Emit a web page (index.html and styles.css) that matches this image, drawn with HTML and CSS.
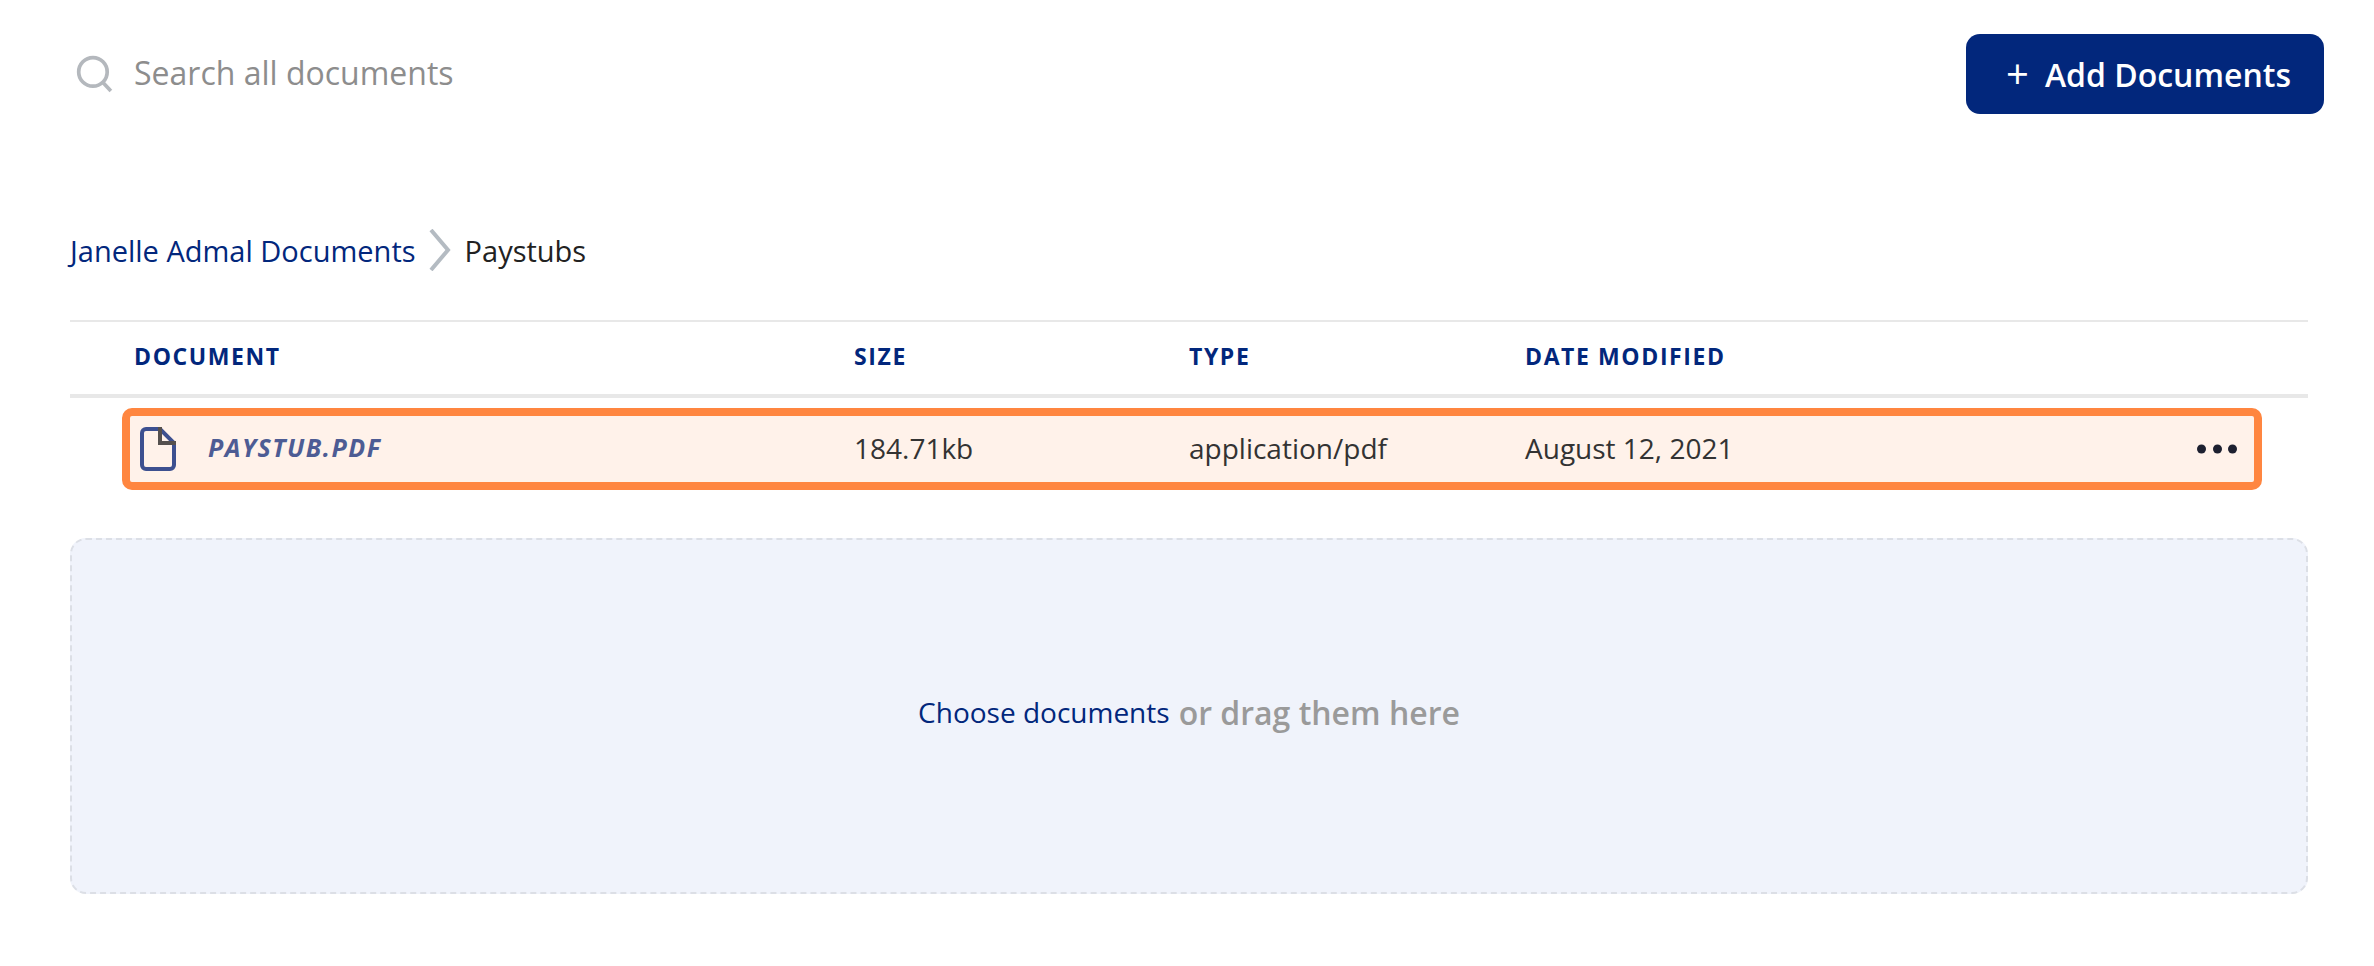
FILE: index.html
```html
<!DOCTYPE html>
<html lang="en">
<head>
<meta charset="utf-8">
<title>Documents</title>
<link rel="stylesheet" href="styles.css">
</head>
<body>
<main class="page">
  <header class="toolbar">
    <div class="search">
      <svg class="search-icon" viewBox="0 0 36 36" aria-hidden="true"><circle cx="17" cy="16" r="13.5"/><path d="M26.5 26 L34 34"/></svg>
      <span class="search-text">Search all documents</span>
    </div>
    <button class="add-btn"><span class="plus">+</span>Add Documents</button>
  </header>
  <nav class="crumbs">
    <span class="crumb-link">Janelle Admal Documents</span>
    <svg class="crumb-sep" viewBox="0 0 22 42" aria-hidden="true"><path d="M2 1 L19 21 L2 41"/></svg>
    <span class="crumb-current">Paystubs</span>
  </nav>
  <section class="table">
    <div class="head cols">
      <span>DOCUMENT</span><span>SIZE</span><span>TYPE</span><span>DATE MODIFIED</span>
    </div>
    <div class="row cols">
      <span class="name">
        <svg class="file-icon" viewBox="0 0 36 44" aria-hidden="true">
          <path class="file-body" d="M18 2 H6 a4 4 0 0 0 -4 4 V38 a4 4 0 0 0 4 4 H30 a4 4 0 0 0 4 -4 V16 L20 2 Z"/>
          <path class="file-fold" d="M20 0 V16 H36"/>
        </svg>
        <em>PAYSTUB.PDF</em>
      </span>
      <span>184.71kb</span>
      <span>application/pdf</span>
      <span>August 12, 2021</span>
      <span class="dots"><i></i><i></i><i></i></span>
    </div>
  </section>
  <section class="drop">
    <span class="choose">Choose documents</span><span class="drag">or drag them here</span>
  </section>
</main>
</body>
</html>
```
FILE: styles.css
```css
* { box-sizing: border-box; }
html, body { margin: 0; background: #fff; }
body { font-family: "Open Sans", "Noto Sans", sans-serif; color: #222; }
.page { padding: 34px 50px 0 70px; width: 2374px; }
.toolbar { display: flex; justify-content: space-between; align-items: center; height: 80px; }
.search { display: flex; align-items: center; padding-left: 5px; }
.search-icon { width: 38px; height: 38px; margin-right: 21px; fill: none; stroke: #b4b8bd; stroke-width: 3.5; }
.search-text { font-size: 32px; line-height: 42px; margin-top: -2px; color: #8d8d8d; }
.add-btn { width: 358px; height: 80px; border: 0; border-radius: 14px; background: #02277c; color: #fff; font: 600 32px "Open Sans", sans-serif; display: flex; align-items: center; justify-content: center; padding: 0 0 0 7px; }
.plus { font-size: 40px; font-weight: 400; margin-right: 16px; line-height: 1; }
.crumbs { display: flex; align-items: center; margin-top: 114px; height: 44px; font-size: 29px; }
.crumb-link { color: #02277c; }
.crumb-sep { width: 22px; height: 42px; margin: 0 14px 0 13px; fill: none; stroke: #b4bbc2; stroke-width: 4; }
.crumb-current { color: #222; }
.table { width: 2238px; margin-top: 48px; }
.cols { display: grid; grid-template-columns: 720px 335px 336px 1fr; }
.head { height: 78px; padding: 0 0 5px 64px; align-items: center; border-top: 2px solid #e8e8e8; border-bottom: 4px solid #e8e8e8; font-size: 23px; font-weight: 700; letter-spacing: 1.6px; color: #02277c; }
.row { position: relative; margin: 10px 0 0 52px; width: 2140px; height: 82px; padding: 0 0 2px 4px; align-items: center; border: 8px solid #ff8640; border-radius: 10px; background: #fff2ea; font-size: 28px; color: #333; }
.name { display: flex; align-items: center; padding-left: 6px; }
.name em { font-size: 25px; line-height: 34px; margin: -2px 0 0 32px; font-weight: 700; letter-spacing: 1.5px; color: #4d5c94; }
.file-icon { width: 36px; height: 44px; margin-top: 2px; fill: none; stroke-width: 4; }
.file-body { stroke: #3d5090; }
.file-fold { stroke: #55504e; }
.dots { position: absolute; right: 17px; top: 50%; transform: translateY(-50%); display: flex; gap: 6.5px; }
.dots i { width: 9px; height: 9px; border-radius: 50%; background: #1d2030; }
.drop { margin-top: 48px; width: 2238px; height: 356px; padding-bottom: 8px; display: flex; align-items: center; justify-content: center; gap: 9px; background: #f0f3fb; border: 2px dashed #dcdfe6; border-radius: 16px; }
.choose { font-size: 28px; color: #02277c; }
.drag { font-size: 32px; font-weight: 600; color: #9a9a9a; }
```
